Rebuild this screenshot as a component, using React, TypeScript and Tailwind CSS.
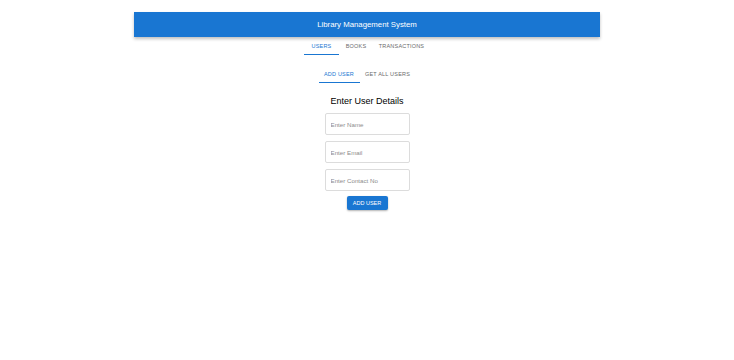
import React, { useState } from "react";

export default function App() {
  const [mainTab, setMainTab] = useState<"users" | "books" | "transactions">("users");
  const [subTab, setSubTab] = useState<"add" | "all">("add");

  const mainTabs = [
    { id: "users", label: "Users", w: "w-[35px]" },
    { id: "books", label: "Books", w: "w-[34px]" },
    { id: "transactions", label: "Transactions", w: "w-[57px]" },
  ] as const;

  return (
    <div className="min-h-screen bg-white font-['Liberation_Sans',Arial,sans-serif] pt-3">
      {/* App bar */}
      <div className="mx-auto w-[466px] h-[25px] bg-[#1976d2] flex items-center justify-center shadow-[0_2px_3px_rgba(0,0,0,0.25)]">
        <span className="text-white text-[7.8px]">Library Management System</span>
      </div>

      {/* Main tabs */}
      <div className="flex justify-center">
        {mainTabs.map((t) => (
          <button
            key={t.id}
            onClick={() => setMainTab(t.id)}
            className={`${t.w} h-[18px] pt-[1px] flex items-center justify-center text-[5.5px] uppercase tracking-[0.2px] border-b-[1.5px] ${
              mainTab === t.id ? "text-[#1976d2] border-[#1976d2]" : "text-[#6b6b6b] border-transparent"
            }`}
          >
            {t.label}
          </button>
        ))}
      </div>

      {/* Sub tabs */}
      <div className="flex justify-center mt-[10px]">
        <button
          onClick={() => setSubTab("add")}
          className={`w-[41px] h-[18px] pt-[1px] flex items-center justify-center text-[5.5px] uppercase tracking-[0.2px] border-b-[1.5px] ${
            subTab === "add" ? "text-[#1976d2] border-[#1976d2]" : "text-[#6b6b6b] border-transparent"
          }`}
        >
          Add User
        </button>
        <button
          onClick={() => setSubTab("all")}
          className={`w-[56px] h-[18px] pt-[1px] flex items-center justify-center text-[5.5px] uppercase tracking-[0.2px] border-b-[1.5px] ${
            subTab === "all" ? "text-[#1976d2] border-[#1976d2]" : "text-[#6b6b6b] border-transparent"
          }`}
        >
          Get All Users
        </button>
      </div>

      {/* Form */}
      <div className="flex flex-col items-center mt-[14px]">
        <h2 className="text-[9px] text-black leading-none">Enter User Details</h2>
        <div className="flex flex-col gap-[6px] mt-[7px]">
          {["Enter Name", "Enter Email", "Enter Contact No"].map((p) => (
            <input
              key={p}
              placeholder={p}
              className="w-[85px] h-[22px] border border-[#dcdcdc] rounded-[2px] px-[5px] text-[6.2px] text-gray-800 placeholder:text-[#8c8c8c] outline-none"
            />
          ))}
        </div>
        <button className="mt-[5px] w-[41px] h-[14px] bg-[#1976d2] text-white text-[5.5px] uppercase rounded-[2px] shadow-[0_1px_2px_rgba(0,0,0,0.3)]">
          Add User
        </button>
      </div>
    </div>
  );
}
